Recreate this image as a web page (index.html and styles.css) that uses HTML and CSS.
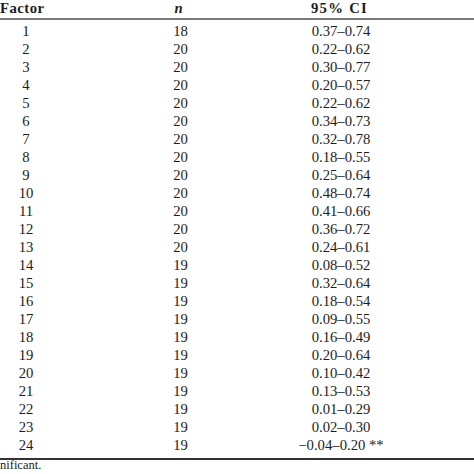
FILE: index.html
```html
<!DOCTYPE html>
<html>
<head>
<meta charset="utf-8">
<link rel="stylesheet" href="styles.css">
</head>
<body>
<div class="tbl">
  <div class="head">
    <div class="c1 h-factor">Factor</div>
    <div class="c2 h-n">n</div>
    <div class="c3 h-ci">95% CI</div>
  </div>
  <div class="body">
    <div class="c1">1</div><div class="c2">18</div><div class="c3">0.37–0.74</div>
    <div class="c1">2</div><div class="c2">20</div><div class="c3">0.22–0.62</div>
    <div class="c1">3</div><div class="c2">20</div><div class="c3">0.30–0.77</div>
    <div class="c1">4</div><div class="c2">20</div><div class="c3">0.20–0.57</div>
    <div class="c1">5</div><div class="c2">20</div><div class="c3">0.22–0.62</div>
    <div class="c1">6</div><div class="c2">20</div><div class="c3">0.34–0.73</div>
    <div class="c1">7</div><div class="c2">20</div><div class="c3">0.32–0.78</div>
    <div class="c1">8</div><div class="c2">20</div><div class="c3">0.18–0.55</div>
    <div class="c1">9</div><div class="c2">20</div><div class="c3">0.25–0.64</div>
    <div class="c1">10</div><div class="c2">20</div><div class="c3">0.48–0.74</div>
    <div class="c1">11</div><div class="c2">20</div><div class="c3">0.41–0.66</div>
    <div class="c1">12</div><div class="c2">20</div><div class="c3">0.36–0.72</div>
    <div class="c1">13</div><div class="c2">20</div><div class="c3">0.24–0.61</div>
    <div class="c1">14</div><div class="c2">19</div><div class="c3">0.08–0.52</div>
    <div class="c1">15</div><div class="c2">19</div><div class="c3">0.32–0.64</div>
    <div class="c1">16</div><div class="c2">19</div><div class="c3">0.18–0.54</div>
    <div class="c1">17</div><div class="c2">19</div><div class="c3">0.09–0.55</div>
    <div class="c1">18</div><div class="c2">19</div><div class="c3">0.16–0.49</div>
    <div class="c1">19</div><div class="c2">19</div><div class="c3">0.20–0.64</div>
    <div class="c1">20</div><div class="c2">19</div><div class="c3">0.10–0.42</div>
    <div class="c1">21</div><div class="c2">19</div><div class="c3">0.13–0.53</div>
    <div class="c1">22</div><div class="c2">19</div><div class="c3">0.01–0.29</div>
    <div class="c1">23</div><div class="c2">19</div><div class="c3">0.02–0.30</div>
    <div class="c1">24</div><div class="c2">19</div><div class="c3">−0.04–0.20 **</div>
  </div>
</div>
<div class="note">nificant.</div>
</body>
</html>
```
FILE: styles.css
```css
html, body {
  margin: 0;
  padding: 0;
  background: #ffffff;
}
body {
  width: 474px;
  height: 474px;
  overflow: hidden;
  font-family: "Liberation Serif", "Times New Roman", serif;
  font-size: 14.7px;
  color: #1c1c1c;
}
.tbl {
  border-bottom: 2px solid #333333;
}
.head,
.body {
  display: grid;
  grid-template-columns: 100px 161px 160px;
}
.head {
  line-height: 16px;
  padding-bottom: 2px;
  border-bottom: 2px solid #7a7a7a;
  font-weight: bold;
}
.body {
  line-height: 18px;
  padding-top: 2px;
  padding-bottom: 4px;
}
.c1 {
  padding-right: 48px;
  text-align: center;
  white-space: nowrap;
}
.c2,
.c3 {
  text-align: center;
  white-space: nowrap;
}
.head .h-factor {
  text-align: left;
  letter-spacing: 0.5px;
}
.head .h-n {
  font-style: italic;
  padding-right: 4px;
}
.head .h-ci {
  letter-spacing: 1.3px;
  padding-right: 3px;
}
.note {
  font-size: 12.5px;
  line-height: 10px;
}
```
